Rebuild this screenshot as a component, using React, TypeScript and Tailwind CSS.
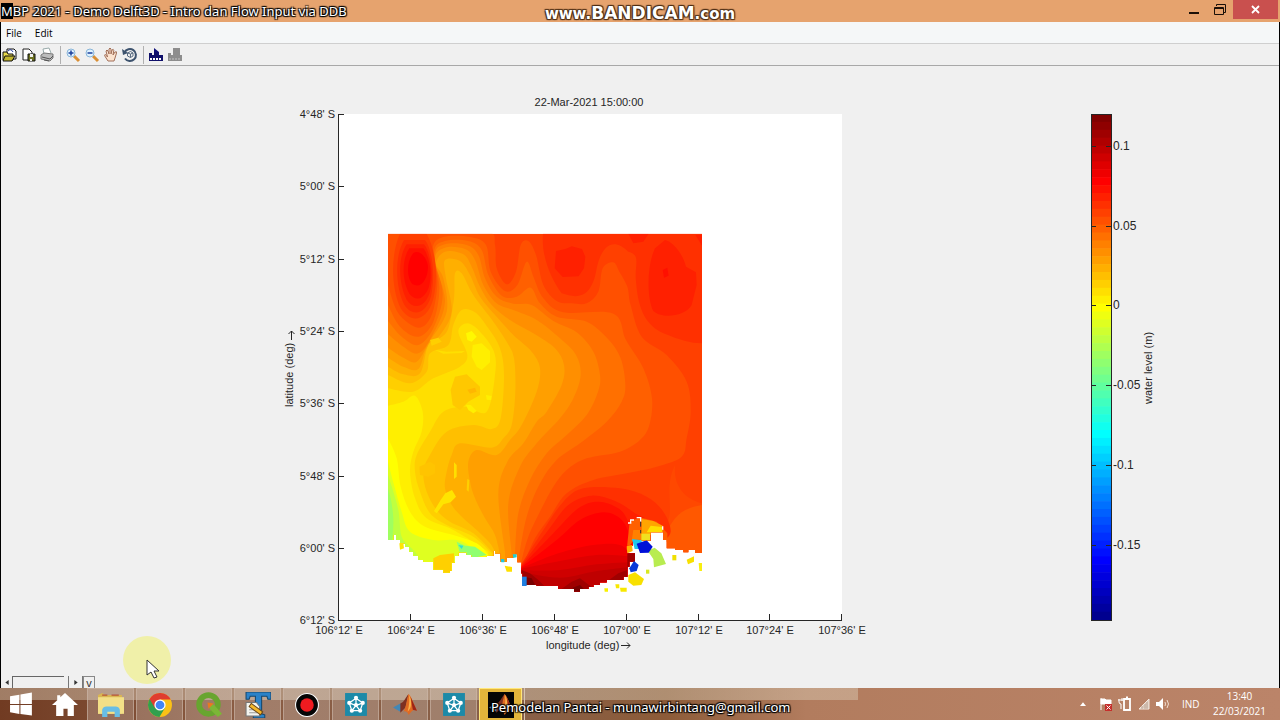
import type { ReactNode } from "react";

type Point = [number, number];

type Contour = {
  color: string;
  points: Point[];
};

// Model grid units: the field spans x 24..966 and y 26..1103.
const LOW_CONTOURS: Contour[] = [
  {
    color: "#ff5000",
    points: [[24, 20], [180, 20], [325, 20], [345, 60], [350, 130], [380, 178], [408, 140], [422, 60], [445, 48], [468, 90], [490, 180], [530, 228], [575, 235], [620, 235], [655, 200], [668, 130], [700, 112], [718, 140], [742, 185], [752, 240], [785, 335], [860, 390], [920, 470], [932, 560], [920, 640], [905, 695], [830, 725], [740, 745], [640, 765], [560, 805], [510, 875], [465, 940], [432, 1015]],
  },
  {
    color: "#ff6000",
    points: [[24, 180], [55, 265], [115, 308], [155, 270], [172, 170], [158, 70], [190, 36], [270, 36], [318, 60], [332, 140], [375, 198], [412, 180], [440, 110], [462, 160], [490, 220], [550, 262], [700, 266], [738, 345], [790, 430], [816, 520], [808, 600], [780, 645], [720, 680], [620, 700], [560, 735], [520, 785], [485, 850], [445, 935], [424, 1010]],
  },
  {
    color: "#ff7000",
    points: [[24, 240], [60, 305], [115, 335], [160, 290], [178, 190], [162, 80], [195, 48], [265, 48], [305, 75], [325, 150], [365, 212], [410, 215], [452, 188], [480, 235], [530, 275], [620, 290], [682, 340], [722, 400], [736, 480], [725, 530], [680, 590], [600, 655], [530, 705], [480, 775], [440, 875], [416, 1000]],
  },
  {
    color: "#ff8000",
    points: [[24, 288], [65, 335], [115, 360], [160, 310], [188, 210], [165, 90], [195, 58], [260, 60], [295, 90], [315, 160], [350, 215], [400, 236], [455, 240], [520, 288], [590, 322], [640, 380], [660, 450], [654, 500], [620, 570], [560, 630], [500, 685], [450, 765], [415, 865], [405, 990]],
  },
  {
    color: "#ff8f00",
    points: [[24, 328], [70, 365], [115, 385], [155, 335], [195, 230], [165, 105], [195, 68], [255, 72], [285, 105], [310, 180], [350, 235], [400, 255], [470, 285], [540, 340], [588, 390], [602, 450], [580, 520], [540, 580], [470, 655], [420, 725], [385, 835], [395, 985]],
  },
  {
    color: "#ff9f00",
    points: [[24, 368], [70, 398], [110, 410], [148, 350], [200, 260], [190, 160], [168, 115], [195, 80], [250, 88], [275, 125], [300, 185], [335, 240], [390, 285], [460, 325], [525, 370], [552, 420], [545, 480], [500, 560], [470, 590], [430, 655], [382, 710], [355, 805], [375, 980]],
  },
  {
    color: "#ffaf00",
    points: [[24, 398], [70, 425], [115, 432], [140, 370], [180, 330], [215, 260], [198, 160], [195, 105], [240, 108], [270, 150], [300, 215], [350, 275], [400, 330], [455, 380], [480, 430], [470, 500], [425, 600], [390, 645], [350, 690], [290, 675], [265, 710], [270, 770], [285, 820], [315, 880], [345, 930], [360, 990]],
  },
  {
    color: "#ffbf00",
    points: [[24, 425], [70, 448], [120, 445], [145, 360], [180, 340], [205, 310], [222, 220], [225, 145], [245, 145], [280, 210], [340, 290], [380, 350], [402, 400], [406, 500], [395, 600], [370, 640], [335, 668], [240, 655], [215, 690], [200, 740], [195, 790], [215, 840], [250, 880], [290, 915], [330, 955], [350, 990]],
  },
  {
    color: "#ffcf00",
    points: [[24, 450], [90, 475], [140, 440], [150, 385], [205, 360], [220, 300], [245, 255], [285, 262], [325, 310], [360, 370], [372, 450], [362, 580], [335, 612], [280, 600], [200, 620], [150, 690], [130, 740], [140, 800], [170, 855], [210, 890], [280, 925], [340, 985]],
  },
  {
    color: "#ffdf00",
    points: [[24, 490], [100, 500], [160, 460], [240, 425], [262, 390], [235, 320], [262, 295], [300, 320], [342, 380], [345, 450], [320, 560], [255, 545], [190, 560], [150, 620], [110, 690], [105, 740], [120, 800], [150, 865], [200, 900], [280, 935], [335, 985]],
  },
  {
    color: "#ffef00",
    points: [[24, 542], [70, 530], [105, 512], [128, 560], [125, 620], [100, 680], [90, 740], [105, 820], [140, 880], [220, 915], [325, 980]],
  },
  {
    color: "#ffff00",
    points: [[24, 640], [50, 700], [62, 785], [90, 860], [135, 905], [220, 930], [290, 955], [325, 990]],
  },
  {
    color: "#dfff20",
    points: [[24, 710], [42, 780], [65, 860], [90, 920], [160, 945], [230, 945], [270, 965], [300, 1000]],
  },
  {
    color: "#bfff40",
    points: [[24, 750], [40, 800], [56, 860], [65, 935], [95, 970], [120, 1000]],
  },
  {
    color: "#9fff60",
    points: [[24, 790], [34, 830], [40, 880], [38, 930], [30, 980]],
  },
];

const HIGH_CONTOURS: Contour[] = [
  {
    color: "#ff3000",
    points: [[424, 1018], [490, 915], [550, 830], [610, 790], [720, 790], [800, 815], [850, 860], [872, 920], [840, 950], [770, 960]],
  },
  {
    color: "#ff2000",
    points: [[424, 1022], [505, 915], [565, 840], [635, 812], [710, 830], [765, 865], [800, 890], [770, 960]],
  },
  {
    color: "#ff1000",
    points: [[424, 1025], [520, 925], [595, 850], [655, 830], [715, 850], [745, 890], [770, 960]],
  },
  {
    color: "#ff0000",
    points: [[424, 1027], [530, 945], [600, 885], [670, 862], [720, 880], [745, 920], [765, 980]],
  },
  {
    color: "#ef0000",
    points: [[424, 1029], [535, 985], [640, 960], [720, 960], [765, 1000]],
  },
  {
    color: "#df0000",
    points: [[424, 1031], [540, 1008], [650, 990], [765, 995]],
  },
  {
    color: "#cf0000",
    points: [[424, 1036], [540, 1035], [650, 1018], [765, 1010]],
  },
  {
    color: "#bf0000",
    points: [[424, 1042], [540, 1058], [640, 1040], [765, 1024]],
  },
];

const COAST =
  "M24 26H966V983H945V975H925V982H910V975H885V970H860V945H850V922H812V948H784V944H758V962H742V985H765V1010H748V1025H742V1055H730V1065H680V1072H660V1080H640V1086H625V1092H600V1100H582V1092H535V1082H470V1080H428V1045H424V1012H412V1000H412V988H400V998H380V1010H362V985H345V978H340V992H320V996H275V990H260V982H235V992H225V1012H215V1038H210V1042H190V1034H160V1010H130V1005H115V992H100V980H88V965H75V955H60V945H48V930H40V945H24Z";

const ISLANDS: Contour[] = [
  { color: "#ffe600", points: [[58, 955], [70, 955], [72, 970], [60, 974]] },
  { color: "#ffe000", points: [[374, 1022], [396, 1026], [396, 1040], [380, 1040]] },
  { color: "#1f7fe0", points: [[426, 1055], [440, 1055], [440, 1083], [426, 1083]] },
  { color: "#20c8e0", points: [[362, 1002], [373, 1002], [373, 1012], [364, 1012]] },
  { color: "#20d0d0", points: [[398, 988], [410, 988], [410, 997], [400, 999]] },
  { color: "#b8ec50", points: [[803, 977], [824, 968], [844, 985], [858, 1017], [822, 1027], [820, 1002]] },
  { color: "#20c8ee", points: [[756, 942], [785, 946], [785, 972], [764, 972]] },
  { color: "#0010d8", points: [[770, 956], [800, 946], [818, 965], [806, 983], [780, 984]] },
  { color: "#0838d8", points: [[748, 1030], [762, 1008], [776, 1020], [770, 1038], [752, 1042]] },
  { color: "#f8e000", points: [[745, 1050], [765, 1042], [792, 1062], [784, 1080], [760, 1082], [745, 1070]] },
  { color: "#ffb000", points: [[740, 964], [756, 960], [758, 978], [742, 985]] },
  { color: "#f0e020", points: [[784, 926], [810, 926], [810, 946], [784, 946]] },
  { color: "#f0e000", points: [[877, 990], [889, 990], [889, 1006], [877, 1006]] },
  { color: "#f8e000", points: [[920, 1004], [942, 994], [942, 1010], [924, 1018]] },
  { color: "#f8ee10", points: [[956, 1014], [966, 1014], [966, 1038], [958, 1038]] },
  { color: "#d8e820", points: [[798, 1034], [808, 1034], [808, 1046], [798, 1046]] },
  { color: "#f8e800", points: [[706, 1078], [718, 1078], [718, 1090], [708, 1090]] },
  { color: "#f8e800", points: [[720, 1088], [740, 1088], [740, 1100], [722, 1100]] },
  { color: "#f8f000", points: [[673, 1090], [684, 1090], [684, 1100], [674, 1100]] },
];

const LAT_TICKS = ["4°48' S", "5°00' S", "5°12' S", "5°24' S", "5°36' S", "5°48' S", "6°00' S", "6°12' S"];
const LON_TICKS = ["106°12' E", "106°24' E", "106°36' E", "106°48' E", "107°00' E", "107°12' E", "107°24' E", "107°36' E"];
const BAR_TICKS = ["0.1", "0.05", "0", "-0.05", "-0.1", "-0.15"];

function smooth(points: Point[]) {
  let d = `M${points[0][0]} ${points[0][1]}`;
  for (let i = 0; i < points.length - 1; i++) {
    const p0 = points[Math.max(i - 1, 0)];
    const p1 = points[i];
    const p2 = points[i + 1];
    const p3 = points[Math.min(i + 2, points.length - 1)];
    d += `C${p1[0] + (p2[0] - p0[0]) / 6} ${p1[1] + (p2[1] - p0[1]) / 6} ${p2[0] - (p3[0] - p1[0]) / 6} ${p2[1] - (p3[1] - p1[1]) / 6} ${p2[0]} ${p2[1]}`;
  }
  return d;
}

function jet(i: number) {
  const clamp = (v: number) => Math.round(Math.max(0, Math.min(1, v)) * 255);
  const r = i < 48 ? (i - 23) / 16 : (71 - i) / 16;
  const g = i < 32 ? (i - 7) / 16 : (55 - i) / 16;
  const b = i < 16 ? (i + 9) / 16 : (39 - i) / 16;
  return `rgb(${clamp(r)},${clamp(g)},${clamp(b)})`;
}

function WaterLevelField() {
  return (
    <svg x="388" y="233" width="314" height="359" viewBox="24 24 942 1077">
      <clipPath id="coast">
        <path d={COAST} />
      </clipPath>
      <g clipPath="url(#coast)">
        <rect x="24" y="20" width="942" height="1090" fill="#ff4000" />
        <path d="M490 20C480 90 515 165 545 205C590 220 635 225 650 130C665 60 700 35 745 80C785 90 762 120 768 170C775 260 800 300 850 325C900 345 930 355 966 355V20Z" fill="#ff3000" />
        {LOW_CONTOURS.map((c) => (
          <path key={c.color} d={`${smooth(c.points)}V1110H24Z`} fill={c.color} />
        ))}

        <path d="M60 26C30 90 34 195 62 250C90 296 140 292 160 222C177 150 165 70 140 26Z" fill="#ff4000" />
        <path d="M72 45C42 95 47 190 72 238C95 276 136 272 153 214C168 145 155 70 135 45Z" fill="#ff3000" />
        <path d="M80 58C50 100 58 185 80 224C98 254 134 250 149 204C164 145 150 78 132 58Z" fill="#ff2000" />
        <path d="M88 70C62 108 68 174 88 206C106 230 132 224 146 188C160 140 146 90 130 70Z" fill="#ff1000" />
        <path d="M100 84C78 110 80 160 98 178C124 192 144 160 144 125C142 98 118 72 100 84Z" fill="#ff0000" />
        <path d="M528 78L556 72L575 64L606 72L616 95L612 130L596 154L548 156L524 130Z" fill="#ff2000" />
        <path d="M825 70C800 120 800 220 820 258C845 282 915 275 935 240L950 180L948 142L918 125C910 90 880 50 855 45Z" fill="#ff2000" />
        <path d="M745 26H806L790 50L760 55Z" fill="#ff2000" />
        <path d="M848 135L862 128L866 152L852 158Z" fill="#ff1000" />
        <path d="M946 30H966V62Z" fill="#ff2000" />
        <path d="M885 720C880 780 910 820 966 835V1000H860V900C885 850 850 790 885 720Z" fill="#ff4800" />
        <path d="M858 925C880 880 900 850 966 840V1000H858Z" fill="#ff5800" />

        <path d="M165 375L200 380L255 378L245 384L190 386Z" fill="#ffdf00" />
        <path d="M150 345L175 338L185 350L155 362Z" fill="#ffcf00" />
        <path d="M258 325L275 318L290 335L275 350L262 345Z" fill="#fff800" />
        <path d="M278 360L305 355L330 378L330 412L305 435L290 425L275 395Z" fill="#ffef00" />
        <path d="M225 455L260 448L300 485L300 510L265 530L240 555L218 540L212 495Z" fill="#ffc800" />
        <path d="M262 494L285 488L290 500L270 506Z" fill="#ffb700" />
        <path d="M258 540L272 540L290 558L280 565L265 555Z" fill="#ffef00" />
        <path d="M318 510L335 513L333 525L320 524Z" fill="#ffef00" />
        <path d="M118 725L150 710L165 720L165 745L145 755L120 750Z" fill="#ffc400" />
        <path d="M222 712L230 720L230 755L222 762Z" fill="#ffdf00" />
        <path d="M262 762L268 765L266 800L260 795Z" fill="#ffcf00" />
        <path d="M196 805L216 795L228 815L212 832L190 838L170 865L162 858L182 825Z" fill="#ffe400" />
        <path d="M160 1000L180 990L222 985V1050H160Z" fill="#ffd000" />
        <path d="M230 950L255 962L285 965L320 990L275 1000L240 985Z" fill="#8fff70" />
        <path d="M235 960L250 962L245 972Z" fill="#30dfcf" />

        {HIGH_CONTOURS.map((c) => (
          <path key={c.color} d={`${smooth(c.points)}V1110H420Z`} fill={c.color} />
        ))}
        <path d="M424 1035L450 1045L475 1065L500 1090H424Z" fill="#9f0000" />
        <path d="M430 1055L455 1060L470 1090H430Z" fill="#780000" />
        <path d="M540 1095L575 1070L600 1060L640 1090L600 1105Z" fill="#9f0000" />
        <path d="M578 1105V1088L600 1080L612 1092V1105Z" fill="#780000" />
        <path d="M680 1070L715 1045L742 1035V1070Z" fill="#9f0000" />
        <path d="M748 900L758 884L785 878L830 890L862 925V950H758L740 975Z" fill="#ff6000" />
        <path d="M760 915H785V948H755Z" fill="#ff8000" />
        <path d="M785 882L820 888L848 902V930H785Z" fill="#ffa500" />
        <path d="M812 902L846 906V922H800Z" fill="#ffdf00" />
        <path d="M742 983H768V1030H742Z" fill="#a00000" />
      </g>
      {ISLANDS.map((island, i) => (
        <polygon key={i} points={island.points.join(" ")} fill={island.color} />
      ))}
      <path d="M744 894H752V885H762M770 878H782V890M848 904V914" fill="none" stroke="#fff" strokeWidth="4" />
      <path d="M782 890V905M782 915V925" stroke="#303030" strokeWidth="3" />
    </svg>
  );
}

function MapPlot() {
  return (
    <svg
      viewBox="280 92 600 564"
      className="w-full font-['Liberation_Sans',Arial,sans-serif] text-[11px]"
      fill="#262626"
      role="img"
      aria-label="Water level map"
    >
      <rect x="339" y="114" width="503" height="506" fill="#fff" />
      <WaterLevelField />
      <g stroke="#262626" strokeWidth="1" shapeRendering="crispEdges">
        <path d="M338.5 114V620.5H842" fill="none" />
        {LAT_TICKS.map((label, i) => (
          <path key={label} d={`M338 ${Math.round(114 + i * 72.3) + 0.5}h6`} />
        ))}
        {LON_TICKS.map((label, i) => (
          <path key={label} d={`M${Math.round(338 + i * 71.9) + 0.5} 620v-6`} />
        ))}
      </g>
      <text x="589" y="106" textAnchor="middle">22-Mar-2021 15:00:00</text>
      {LAT_TICKS.map((label, i) => (
        <text key={label} x="335" y={Math.round(118 + i * 72.3)} textAnchor="end">{label}</text>
      ))}
      {LON_TICKS.map((label, i) => (
        <text key={label} x={Math.round(339 + i * 71.9)} y="634" textAnchor="middle">{label}</text>
      ))}
      <text x="546" y="649">longitude (deg)</text>
      <path d="M621 645.5h9M627 642.5l3 3l-3 3" fill="none" stroke="#262626" />
      <text transform="translate(293 407) rotate(-90)">latitude (deg)</text>
      <path d="M291.5 340v-9M288.5 334l3-3l3 3" fill="none" stroke="#262626" />
    </svg>
  );
}

function ColorBar() {
  return (
    <svg
      viewBox="1085 92 80 564"
      className="w-full font-['Liberation_Sans',Arial,sans-serif] text-[12px]"
      fill="#262626"
      role="img"
      aria-label="Water level scale"
    >
      {Array.from({ length: 64 }, (_, i) => (
        <rect key={i} x="1091" y={114 + i * 7.9} width="20" height="8.5" fill={jet(63 - i)} />
      ))}
      <rect x="1091.5" y="114.5" width="20" height="506" fill="none" stroke="#262626" />
      {BAR_TICKS.map((label, i) => {
        const y = Math.round(146 + i * 79.7);
        return (
          <g key={label}>
            <path d={`M1091 ${y + 0.5}h5M1106 ${y + 0.5}h5`} stroke="#262626" />
            <text x="1113" y={y + 4}>{label}</text>
          </g>
        );
      })}
      <text transform="translate(1152 368) rotate(-90)" textAnchor="middle" className="text-[11px]">
        water level (m)
      </text>
    </svg>
  );
}

function ToolButton({ label, children }: { label: string; children: ReactNode }) {
  return (
    <button type="button" aria-label={label} className="flex h-5 w-[19px] items-center">
      <svg viewBox="0 0 16 16" className="size-4 shrink-0" fill="none">
        {children}
      </svg>
    </button>
  );
}

function Toolbar() {
  return (
    <div className="flex h-[22px] items-center border-b border-[#a8a8a8] bg-[#f0f0f0]">
      <ToolButton label="Open">
        <path d="M6 2h7l2 2v8H6z" fill="#fff" stroke="#111" />
        <path d="M2 5h4l1 2h5v6H2z" fill="#e6d84a" stroke="#111" />
        <path d="M2 14l2-5h10l-3 5z" fill="#c2b52c" stroke="#111" />
        <path d="M7 4q3-3 5 1" stroke="#223a9c" />
      </ToolButton>
      <ToolButton label="Save">
        <path d="M3 2h6l3 3v8H3z" fill="#fff" stroke="#222" />
        <path d="M8 7h7v7H8z" fill="#6b7020" stroke="#111" />
        <path d="M10 7h3v3h-3zM10 12h2v2h-2z" fill="#eee" />
      </ToolButton>
      <ToolButton label="Print">
        <path d="M5 7L4 2l6-1l2 5" fill="#fff" stroke="#9aa" />
        <path d="M2 8l3-2l9 1v4l-3 3l-9-2z" fill="#bcbcbc" stroke="#777" />
        <path d="M3 10l8 2l3-3M5 13l5 1" stroke="#555" />
      </ToolButton>
      <span className="ml-[2px] mr-1 h-[18px] w-px bg-[#b0b0b0]" />
      <ToolButton label="Zoom in">
        <path d="M9 9l5 5" stroke="#d98f35" strokeWidth="3" />
        <circle cx="6" cy="6" r="4" fill="#dff2ff" stroke="#8ab6d8" />
        <path d="M3.500 6h5M6 3.500v5" stroke="#1b3f9c" strokeWidth="1.500" />
      </ToolButton>
      <ToolButton label="Zoom out">
        <path d="M9 9l5 5" stroke="#d98f35" strokeWidth="3" />
        <circle cx="6" cy="6" r="4" fill="#dff2ff" stroke="#8ab6d8" />
        <path d="M3.500 6h5" stroke="#1b3f9c" strokeWidth="1.500" />
      </ToolButton>
      <ToolButton label="Pan">
        <path d="M5 14L1.500 8.500q0-2 2 0L4.500 10L3 4q1-2 2 0l1 3V2q1-2 2 0v5l1-4q1.500-1.500 1.800.5L10 8l2-3q2-1 1.500 1L12 11l-1 3z" fill="#fbe3cf" stroke="#a26f58" />
      </ToolButton>
      <ToolButton label="Rotate 3D">
        <path d="M2.500 5.500A6 6 0 1 1 3 11.500" stroke="#3d536e" strokeWidth="2" />
        <path d="M0 2l1 6l5-2z" fill="#3d536e" />
        <path d="M5.500 6l3-1.500L11 6v3l-2.500 1.500l-3-1.500zM5.500 6l3 1l2.500-1M8.500 7v3.500" stroke="#596c82" />
      </ToolButton>
      <span className="ml-[2px] mr-1 h-[18px] w-px bg-[#b0b0b0]" />
      <ToolButton label="Start animation">
        <path d="M6 1l5 4v3H6z" fill="#10107a" />
        <path d="M1 8V6h3v2h2V5h4v3h5v6H1z" fill="#10106a" />
        <path d="M2 12h12" stroke="#fff" strokeWidth="2" strokeDasharray="2 1" />
      </ToolButton>
      <ToolButton label="Stop animation">
        <path d="M6 1h7v7H6zM1 8V6h3v2h11v6H1z" fill="#8d8d8d" />
        <path d="M2 12h12" stroke="#c4c4c4" strokeWidth="1" strokeDasharray="2 1" />
      </ToolButton>
    </div>
  );
}

function TitleBar() {
  return (
    <header className="grid h-[22px] grid-cols-[1fr_auto_1fr] items-start bg-[#e6a36e] text-white">
      <h1 className="whitespace-nowrap pl-px font-['Noto_Sans',sans-serif] text-[13px] leading-[22px] [text-shadow:1px_1px_1px_#000,-1px_-1px_1px_#000,1px_-1px_1px_#000,-1px_1px_1px_#000]">
        <span className="inline-block h-4 bg-black leading-4">M</span>BP 2021 - Demo Delft3D - Intro dan Flow Input via DDB
      </h1>
      <p className="font-['DejaVu_Sans',sans-serif] text-[15px] font-bold leading-[26px] [text-shadow:1px_1px_1px_#4b2c14,-1px_-1px_1px_#4b2c14,1px_-1px_1px_#4b2c14,-1px_1px_1px_#4b2c14]">
        www.<span className="text-[17px]">BANDICAM</span>.com
      </p>
      <div className="flex justify-end text-[#1b1008]">
        <button type="button" aria-label="Minimize" className="flex h-[19px] w-[26px] items-center justify-center">
          <svg viewBox="0 0 12 12" className="size-3"><path d="M1 8h10v2H1z" fill="currentColor" /></svg>
        </button>
        <button type="button" aria-label="Restore" className="flex h-[19px] w-[26px] items-center justify-center">
          <svg viewBox="0 0 12 12" className="size-3" fill="none" stroke="currentColor">
            <path d="M2.500 2V.5h9v8H10" />
            <path d="M.5 3.500h9v7h-9zM.5 4.500h9" />
          </svg>
        </button>
        <button type="button" aria-label="Close" className="mr-[2px] flex h-[19px] w-[45px] items-center justify-center bg-[#c9504e] text-white">
          <svg viewBox="0 0 12 12" className="size-3" stroke="currentColor" strokeWidth="1.800"><path d="M2 2l7 7M9 2l-7 7" /></svg>
        </button>
      </div>
    </header>
  );
}

function MatlabLogo() {
  return (
    <>
      <path d="M1 15l7-4l4 2l-4 6z" fill="#4387b5" />
      <path d="M8 11c4-1 5-6 8-9l-3 13l-5 5z" fill="#7e3022" />
      <path d="M16 2c3 3 5 10 8 16c-3-2-5 0-8 4c-1-3-3-4-5-3c3-5 3-12 5-17z" fill="#e06a22" />
      <path d="M16 2c1 4 1 10-1 17c3-3 4-6 3-12z" fill="#f9b24b" />
      <path d="M18 5l6 13l-4-1z" fill="#9c2417" />
    </>
  );
}

function DelftLogo() {
  return (
    <>
      <rect x="2" y="1" width="21" height="22" fill="#1c8aa8" />
      <path d="M12.500 6L19 10.500L16.500 18h-8L6 10.500zM12.500 6v6M19 10.500L12.500 13L6 10.500M8.500 18l4-5l4 5" fill="none" stroke="#fff" strokeWidth="1.200" />
      <g fill="#fff">
        <circle cx="12.500" cy="5.500" r="2" />
        <circle cx="19" cy="10.500" r="2" />
        <circle cx="16.500" cy="18" r="2" />
        <circle cx="8.500" cy="18" r="2" />
        <circle cx="6" cy="10.500" r="2" />
        <circle cx="12.500" cy="12.500" r="2" />
      </g>
    </>
  );
}

function TaskButton({ label, plain = false, children }: { label: string; plain?: boolean; children: ReactNode }) {
  return (
    <button
      type="button"
      aria-label={label}
      className={[
        "flex h-8 items-center justify-center",
        plain ? "w-[43px]" : "mr-[2px] w-[47px] border border-b-0 border-[#cdb8a8]/60 bg-white/20",
      ].join(" ")}
    >
      <svg viewBox="0 0 25 25" className="size-[26px] shrink-0">
        {children}
      </svg>
    </button>
  );
}

function Taskbar() {
  return (
    <footer className="relative flex h-8 bg-[linear-gradient(90deg,#713b22_0%,#8a5c43_18%,#886048_40%,#8c5b38_52%,#b27c5e_63%,#bb8469_100%)]">
      <div className="flex w-[67%] bg-[linear-gradient(180deg,rgba(218,205,183,0.45)_12px,transparent_12px)]">
        <TaskButton label="Start" plain>
          <path d="M1 5l9-1.500v9H1zM11 3.300L22 1.500v11H11zM1 13.500h9v8.500L1 20.500zM11 13.500h11v10l-11-1.500z" fill="#fff" />
        </TaskButton>
        <TaskButton label="Home" plain>
          <path d="M12.500 2L25 13.500h-4V24h-6v-7h-4v7H4V13.500H0L5 9V4h3v2z" fill="#fff" />
        </TaskButton>
        <span className="w-px" />
        <TaskButton label="File Explorer">
          <path d="M0 3l4-2l3 2h16v18H0z" fill="#d9b552" />
          <path d="M0 5h25v16H0z" fill="#f3df87" />
          <path d="M4 3h5M13 3h7" stroke="#b5533a" />
          <path d="M4 24v-7q1-3 4-3h9q3 0 4 3v7h-5v-5H9v5z" fill="#68bde5" />
        </TaskButton>
        <TaskButton label="Chrome">
          <circle cx="12.500" cy="12.500" r="11.500" fill="#fbc116" />
          <path d="M12.500 12.500L2.500 6.800A11.500 11.500 0 0 0 12 24z" fill="#31a04e" />
          <path d="M2.500 6.800A11.500 11.500 0 0 1 22.800 7.200H12.500L7.500 15.500z" fill="#df3d30" />
          <path d="M12 24l5.500-9l-5-2.500l-5 3z" fill="#31a04e" />
          <circle cx="12.500" cy="12.500" r="5.400" fill="#fff" />
          <circle cx="12.500" cy="12.500" r="4.200" fill="#4285f4" />
        </TaskButton>
        <TaskButton label="QGIS">
          <circle cx="12" cy="12" r="9" fill="none" stroke="#68a52f" strokeWidth="5.500" />
          <path d="M12 11l5 1l8 9l-4 3l-8-8z" fill="#7cb637" />
          <path d="M11 10l6 1l-5 5z" fill="#e9791f" />
        </TaskButton>
        <TaskButton label="Text editor">
          <path d="M1 0h24v7h-3l-1-3h-5v17l3 1v3H8v-3l2-1V4H5L4 7H1z" fill="#2b82c8" stroke="#15476d" />
          <path d="M1 10h10l3 4v9H1z" fill="#f4f4ef" stroke="#777" />
          <path d="M4 14h5M4 17h6M4 20h8" stroke="#999" />
          <path d="M6 11l11 8l-2 3L4 14z" fill="#f5b829" stroke="#6b4818" />
        </TaskButton>
        <TaskButton label="Bandicam">
          <circle cx="12.500" cy="12.500" r="11" fill="#050505" stroke="#fff" />
          <circle cx="12.500" cy="12.500" r="6.500" fill="#ef1b20" />
        </TaskButton>
        <TaskButton label="Delft Dashboard"><DelftLogo /></TaskButton>
        <TaskButton label="MATLAB"><MatlabLogo /></TaskButton>
        <TaskButton label="Delft3D"><DelftLogo /></TaskButton>
        <button type="button" aria-label="MATLAB figure" className="flex h-8 w-[43px] items-center justify-center border border-b-0 border-[#ffe77b] bg-[#e3b53b]">
          <svg viewBox="0 0 25 25" className="size-[26px] shrink-0">
            <rect width="25" height="25" fill="#050505" />
            <MatlabLogo />
          </svg>
        </button>
        <span className="ml-[2px] w-px bg-[#d5c4b3]" />
      </div>

      <p className="absolute left-[491px] top-[9px] whitespace-nowrap font-['Noto_Sans',sans-serif] text-[13px] leading-5 text-white [text-shadow:1px_1px_1px_#000,-1px_-1px_1px_#000,1px_-1px_1px_#000,-1px_1px_1px_#000]">
        Pemodelan Pantai - munawirbintang@gmail.com
      </p>

      <div className="ml-auto flex items-center gap-[3px] pr-[14px] font-['Open_Sans',sans-serif] text-[10px] text-white">
        <button type="button" aria-label="Show hidden icons" className="flex w-4 justify-center">
          <svg viewBox="0 0 8 5" className="h-1 w-[6px]"><path d="M4 0l4 5H0z" fill="#fff" /></svg>
        </button>
        <span className="w-px" />
        <svg viewBox="0 0 16 16" className="size-4">
          <path d="M3 2v12M3 3h4l1 1h5v5H8L7 8H3z" fill="#fff" stroke="#fff" />
          <path d="M7 8h7v7H7z" fill="#c62f2c" />
          <path d="M8.500 9.500l4 4M12.500 9.500l-4 4" stroke="#fff" />
        </svg>
        <svg viewBox="0 0 16 16" className="size-4">
          <path d="M7 3h6v11H7zM9 1.500h2" fill="none" stroke="#fff" strokeWidth="1.800" />
          <path d="M2 3v3q0 2 2 2v5M1 4h5M5 2v3" fill="none" stroke="#fff" />
        </svg>
        <svg viewBox="0 0 16 16" className="size-4">
          <path d="M3 13L13 3v10z" fill="#d9c9bc" stroke="#f4e8df" />
          <path d="M6 10v3M9 8v5M11 6v7" stroke="#c0a898" />
        </svg>
        <svg viewBox="0 0 16 16" className="size-4">
          <path d="M1 6h3l4-4v12l-4-4H1z" fill="#fff" />
          <path d="M10 6q1 2 0 4M12 4q3 4 0 8" fill="none" stroke="#f0ded0" />
        </svg>
        <span className="ml-2 w-7">IND</span>
        <time className="text-center leading-[15px]">
          13:40<br />22/03/2021
        </time>
      </div>
    </footer>
  );
}

export default function App() {
  return (
    <div className="flex min-h-screen flex-col bg-[#f0f0f0] text-[#262626]">
      <TitleBar />
      <div className="flex grow flex-col border-x border-black">
        <nav className="flex h-[22px] items-center gap-[13px] border-b border-[#cfcfcf] bg-[#f5f7f8] pl-[5px] pt-px font-['Open_Sans',sans-serif] text-[10px] text-black">
          <button type="button">File</button>
          <button type="button">Edit</button>
        </nav>
        <Toolbar />
        <main className="relative flex grow flex-col justify-between">
          <div className="grid grid-cols-[279fr_600fr_205fr_80fr_114fr] pt-[26px]">
            <div className="col-start-2"><MapPlot /></div>
            <div className="col-start-4"><ColorBar /></div>
          </div>
          <div className="flex h-3 items-stretch text-[#333]">
            <button type="button" aria-label="Scroll left" className="flex w-[11px] items-center justify-center">
              <svg viewBox="0 0 4 6" className="h-[5px] w-1"><path d="M4 0v6L0 3z" fill="currentColor" /></svg>
            </button>
            <span className="w-[52px] border-l border-t border-[#666]" />
            <button type="button" aria-label="Scroll right" className="ml-1 flex w-[15px] items-center justify-center border-x border-[#777]">
              <svg viewBox="0 0 4 6" className="h-[5px] w-1"><path d="M0 0v6l4-3z" fill="currentColor" /></svg>
            </button>
            <button type="button" className="w-3 border border-b-0 border-[#888] font-['Liberation_Sans',sans-serif] text-[11px] leading-3">v</button>
          </div>
          <svg viewBox="0 0 50 50" className="absolute bottom-[3px] left-[121px] size-[50px]">
            <circle cx="25" cy="25" r="24" fill="#f0f0a9" />
            <path d="M25 25v15l4-3l3 6l3-1l-3-6h5z" fill="#fff" stroke="#333" />
          </svg>
        </main>
      </div>
      <Taskbar />
    </div>
  );
}
